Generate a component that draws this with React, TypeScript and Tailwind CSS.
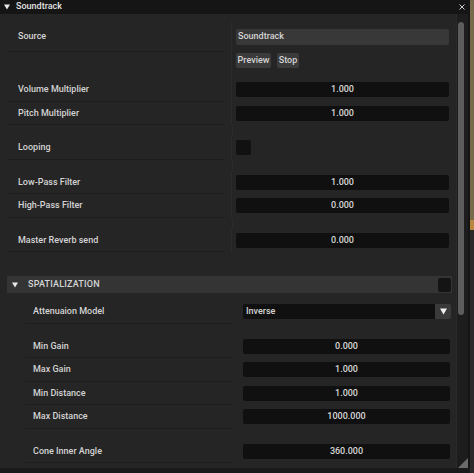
import React from 'react';

const Tri = ({ className = '' }: { className?: string }) => (
  <svg viewBox="0 0 6 6" className={className}>
    <path d="M0 0.5 L6 0.5 L3 5.5 Z" fill="currentColor" />
  </svg>
);

const NumField = ({ value, wide = false }: { value: string; wide?: boolean }) => (
  <div
    className={`h-[15px] ${wide ? 'w-[213px]' : 'w-[207px]'} bg-[#101010] rounded-[2px] flex items-center justify-center text-[#d6d6d6]`}
  >
    {value}
  </div>
);

// top section row: label column 8..224, divider at 232, value from 237
const Row1 = ({ label, children }: { label: string; children?: React.ReactNode }) => (
  <div className="flex h-[23.5px]">
    <div className="w-[216px] pl-[10px] pt-[1px] flex items-center border-b border-[#1e1e1e]">{label}</div>
    <div className="w-[8px] border-r border-[#2b2b2b]" />
    <div className="pl-[4px] flex items-center">{children}</div>
  </div>
);

// spatialization row: label column 25..232, value from 243
const Row2 = ({ label, children }: { label: string; children?: React.ReactNode }) => (
  <div className="flex h-[23.5px] pl-[25px]">
    <div className="w-[207px] pl-[8px] pt-[1px] flex items-center border-b border-[#1e1e1e]">{label}</div>
    <div className="pl-[11px] flex items-center">{children}</div>
  </div>
);

const Gap1 = () => (
  <div className="flex h-[11px]">
    <div className="w-[224px]" />
    <div className="border-r border-[#2b2b2b]" />
  </div>
);

export default function App() {
  return (
    <div
      className="w-[474px] h-[473px] flex bg-[#1a1a1a] overflow-hidden text-[9px] font-medium text-[#d4d4d4]"
      style={{ fontFamily: 'Roboto, "Noto Sans", sans-serif' }}
    >
      {/* window */}
      <div className="w-[470px] h-[468px] flex flex-col bg-[#252525] relative border-r-2 border-[#141414]">
        {/* title bar */}
        <div className="h-[14px] bg-[#151515] flex items-center text-[#e2e2e2] shrink-0">
          <Tri className="w-[6px] h-[6px] ml-[4px] text-[#e8e8e8]" />
          <span className="ml-[6px]">Soundtrack</span>
          <svg viewBox="0 0 6 6" className="ml-auto mr-[3px] w-[6px] h-[6px]">
            <path d="M0.5 0.5 L5.5 5.5 M5.5 0.5 L0.5 5.5" stroke="#cfcfcf" strokeWidth="1" />
          </svg>
        </div>

        <div className="flex flex-1 min-h-0">
          <div className="w-[456px] overflow-hidden">
            {/* main section */}
            <div className="pt-[8px] pl-[8px]">
              <div className="flex">
                <div className="w-[216px] h-[30px] pl-[10px] pt-[1px] flex items-center border-b border-[#1e1e1e]">Source</div>
                <div className="w-[8px] border-r border-[#2b2b2b]" />
                <div className="pl-[4px] h-[56px]">
                  <div className="mt-[7px] h-[16px] w-[213px] bg-[#383838] rounded-[2px] flex items-center pl-[2px]">
                    Soundtrack
                  </div>
                  <div className="mt-[8px] flex gap-[6px]">
                    <div className="h-[15px] w-[35px] bg-[#3b3b3b] rounded-[2px] flex items-center justify-center">Preview</div>
                    <div className="h-[15px] w-[22px] bg-[#3b3b3b] rounded-[2px] flex items-center justify-center">Stop</div>
                  </div>
                </div>
              </div>
              <Row1 label="Volume Multiplier">
                <NumField value="1.000" wide />
              </Row1>
              <Row1 label="Pitch Multiplier">
                <NumField value="1.000" wide />
              </Row1>
              <Gap1 />
              <Row1 label="Looping">
                <div className="w-[15px] h-[15px] bg-[#111111] rounded-[2px]" />
              </Row1>
              <Gap1 />
              <Row1 label="Low-Pass Filter">
                <NumField value="1.000" wide />
              </Row1>
              <Row1 label="High-Pass Filter">
                <NumField value="0.000" wide />
              </Row1>
              <Gap1 />
              <Row1 label="Master Reverb send">
                <NumField value="0.000" wide />
              </Row1>
            </div>

            {/* spatialization header */}
            <div className="mt-[24px] ml-[7px] w-[445px] h-[17px] bg-[#343434] flex items-center">
              <Tri className="w-[6px] h-[6px] ml-[5px] text-[#e8e8e8]" />
              <span className="ml-[10px] tracking-[0.2px]">SPATIALIZATION</span>
              <div className="ml-auto mr-[1px] w-[13px] h-[14px] bg-[#141414] rounded-[2px]" />
            </div>

            <div className="mt-[7px]">
              <Row2 label="Attenuaion Model">
                <div className="h-[15px] w-[208px] flex">
                  <div className="flex-1 bg-[#101010] rounded-l-[2px] flex items-center pl-[3px]">Inverse</div>
                  <div className="w-[16px] bg-[#3a3a3a] rounded-r-[2px] flex items-center justify-center">
                    <Tri className="w-[7px] h-[7px] text-[#f0f0f0]" />
                  </div>
                </div>
              </Row2>
              <div className="h-[11px]" />
              <Row2 label="Min Gain">
                <NumField value="0.000" />
              </Row2>
              <Row2 label="Max Gain">
                <NumField value="1.000" />
              </Row2>
              <Row2 label="Min Distance">
                <NumField value="1.000" />
              </Row2>
              <Row2 label="Max Distance">
                <NumField value="1000.000" />
              </Row2>
              <div className="h-[11px]" />
              <Row2 label="Cone Inner Angle">
                <NumField value="360.000" />
              </Row2>
            </div>
          </div>

          {/* scrollbar */}
          <div className="w-[12px] bg-[#1d1d1d] border-l border-[#2a2a2a]">
            <div className="mt-[8px] ml-[1px] w-[6px] h-[293px] bg-[#5c5c5c] rounded-[3px]" />
          </div>
        </div>

        {/* resize grip */}
        <svg viewBox="0 0 10 10" className="absolute right-0 bottom-0 w-[10px] h-[10px]">
          <path d="M10 0 L10 10 L0 10 Z" fill="#6a6a6a" />
        </svg>
      </div>

      {/* background beyond the window */}
      <div className="w-[4px] flex flex-col">
        <div className="h-[220px] bg-[#7a6a4c]" />
        <div className="h-[10px] bg-[#b8873f]" />
        <div className="flex-1 bg-[#2a2a2a]" />
      </div>
    </div>
  );
}
